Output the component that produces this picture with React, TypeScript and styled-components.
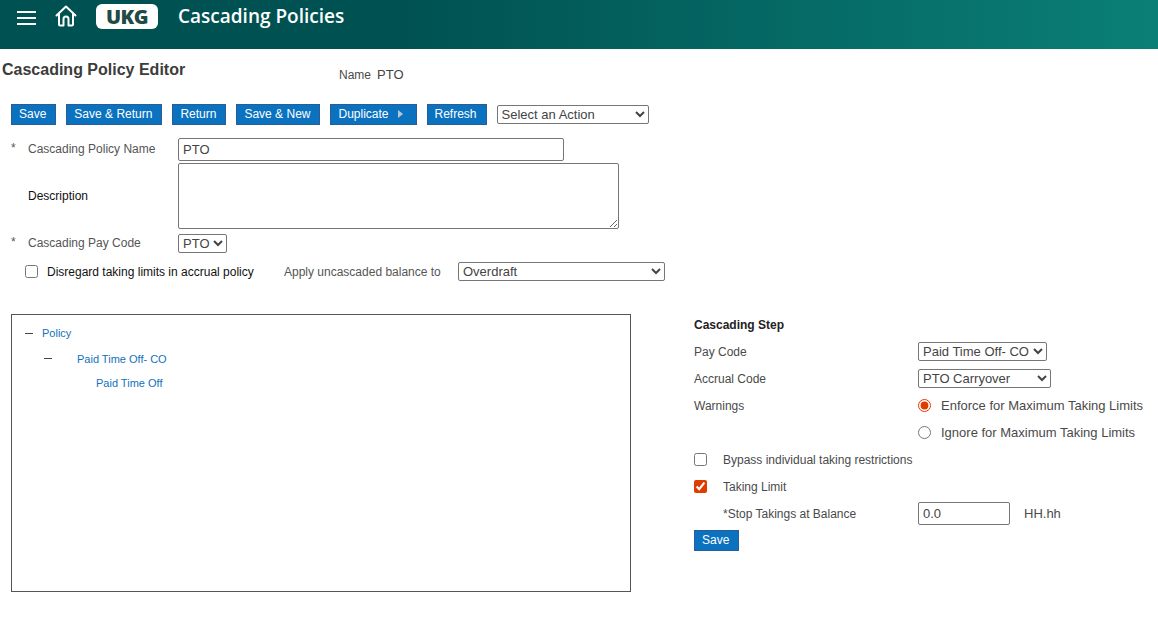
import styled, { createGlobalStyle } from 'styled-components'

const GlobalStyle = createGlobalStyle`
  html, body {
    margin: 0;
    padding: 0;
    background: #fff;
    font-family: "Liberation Sans", Arial, sans-serif;
    font-size: 12px;
    color: #4a4a4a;
  }
`

const Page = styled.div`
  width: 1158px;
  height: 637px;
  overflow: hidden;
`

const TopBar = styled.header`
  height: 49px;
  display: flex;
  align-items: flex-start;
  background: linear-gradient(90deg, #005151 0%, #005252 35%, #0a7f76 100%);
  color: #fff;
`

const MenuButton = styled.div`
  width: 19px;
  margin: 11px 0 0 17px;
  display: flex;
  flex-direction: column;
  gap: 4px;
  span {
    height: 2px;
    background: #fff;
  }
`

const HomeIcon = styled.svg`
  width: 24px;
  height: 24px;
  margin: 4px 0 0 18px;
`

const Logo = styled.div`
  width: 62px;
  height: 25px;
  margin: 4px 0 0 18px;
  background: #fff;
  border-radius: 6px;
  display: flex;
  align-items: center;
  justify-content: center;
  color: #1f4a45;
  font-family: "Open Sans", sans-serif;
  font-weight: 800;
  font-size: 20px;
  letter-spacing: -0.6px;
`

const AppTitle = styled.div`
  margin: 3px 0 0 20px;
  font-family: "Open Sans", sans-serif;
  font-size: 19px;
  font-weight: 600;
  line-height: 27px;
`

const TitleRow = styled.div`
  height: 55px;
  display: flex;
  align-items: flex-start;
`

const EditorTitle = styled.h1`
  width: 337px;
  margin: 12px 0 0 2px;
  font-size: 16px;
  line-height: 18px;
  font-weight: 700;
  color: #3c3c3c;
`

const NameInfo = styled.div`
  margin-top: 19px;
  display: flex;
  gap: 6px;
  line-height: 15px;
  span:last-child {
    margin-top: -1px;
    color: #444;
    font-size: 13px;
  }
`

const Toolbar = styled.div`
  height: 21px;
  padding-left: 11px;
  display: flex;
  align-items: center;
  gap: 10px;
`

const Button = styled.button`
  height: 21px;
  padding: 0 9px 2px 7px;
  margin: 0;
  border: 1px solid #2a5d95;
  border-radius: 0;
  background: #0b72c0;
  color: #fff;
  font: 12px "Liberation Sans", Arial, sans-serif;
  display: flex;
  align-items: center;
  gap: 9px;
`

const Caret = styled.i`
  width: 0;
  height: 0;
  margin-right: 4px;
  border-left: 5px solid #b9c6d2;
  border-top: 4px solid transparent;
  border-bottom: 4px solid transparent;
`

const Select = styled.select<{ $width: number }>`
  width: ${props => props.$width}px;
  height: 19px;
  padding: 0;
  border: 1px solid #767676;
  border-radius: 2px;
  background: #fff;
  color: #444;
  font: 13px "Liberation Sans", Arial, sans-serif;
`

const FormRow = styled.div<{ $height: number; $top: number }>`
  height: ${props => props.$height}px;
  margin-top: ${props => props.$top}px;
  display: flex;
  align-items: center;
`

const Required = styled.span`
  width: 28px;
  padding-left: 11px;
  box-sizing: border-box;
  color: #555;
  position: relative;
  top: -1px;
`

const FieldLabel = styled.label<{ $dark?: boolean }>`
  width: 150px;
  color: ${props => (props.$dark ? '#111' : '#555')};
`

const TextInput = styled.input<{ $width: number }>`
  width: ${props => props.$width}px;
  height: 23px;
  box-sizing: border-box;
  padding: 0 4px;
  margin: 0;
  border: 1px solid #767676;
  border-radius: 2px;
  color: #444;
  font: 13px "Liberation Sans", Arial, sans-serif;
`

const TextArea = styled.textarea`
  width: 441px;
  height: 66px;
  box-sizing: border-box;
  margin: 0;
  border: 1px solid #767676;
  border-radius: 2px;
`

const Check = styled.input`
  width: 13px;
  height: 13px;
  margin: 0;
  accent-color: #e03c00;
  flex: none;
`

const OptionsRow = styled.div`
  height: 29px;
  margin-top: 1px;
  padding-left: 25px;
  display: flex;
  align-items: center;
`

const OptionLabel = styled.span`
  width: 237px;
  margin-left: 9px;
  color: #111;
`

const PlainLabel = styled.span`
  width: 174px;
  color: #555;
`

const Columns = styled.div`
  margin-top: 28px;
  display: flex;
  align-items: flex-start;
`

const TreePanel = styled.div`
  width: 620px;
  height: 278px;
  margin-left: 11px;
  box-sizing: border-box;
  border: 1px solid #555;
  padding-top: 6px;
  font-size: 11px;
`

const TreeRow = styled.div<{ $indent: number; $gap: number; $top: number }>`
  height: 24.5px;
  margin-top: ${props => props.$top}px;
  padding-left: ${props => props.$indent}px;
  display: flex;
  align-items: center;
  gap: ${props => props.$gap}px;
  color: #1272bd;
`

const Dash = styled.i`
  width: 8px;
  height: 1px;
  background: #444;
`

const StepPanel = styled.div`
  margin-left: 63px;
  padding-top: 1px;
  width: 464px;
`

const StepTitle = styled.div`
  height: 23px;
  line-height: 20px;
  font-weight: 700;
  color: #222;
`

const StepRow = styled.div`
  height: 27px;
  display: grid;
  grid-template-columns: 224px 1fr;
  align-items: center;
`

const BalanceRow = styled(StepRow)`
  margin-bottom: 3px;
`

const RadioOption = styled.div`
  display: flex;
  align-items: center;
  gap: 10px;
  font-size: 13px;
`

const RadioInput = styled.input`
  width: 13px;
  height: 13px;
  margin: 0;
  accent-color: #e03c00;
`

const CheckRow = styled.div`
  height: 27px;
  display: flex;
  align-items: center;
  gap: 16px;
`

const BalanceCell = styled.div`
  display: flex;
  align-items: center;
  gap: 14px;
  font-size: 13px;
`

const BalanceLabel = styled.span`
  padding-left: 29px;
`

function HomeGlyph() {
  return (
    <HomeIcon viewBox="0 0 24 24" fill="none" stroke="#fff" strokeWidth="2" strokeLinejoin="round" strokeLinecap="round">
      <path d="M2.5 11.5 12 2.500l9.500 9" />
      <path d="M5 9.500V20.500a1 1 0 0 0 1 1h3.500V15a2.500 2.500 0 0 1 5 0v6.500h3.500a1 1 0 0 0 1-1V9.500" />
    </HomeIcon>
  )
}

export default function App() {
  return (
    <Page>
      <GlobalStyle />
      <TopBar>
        <MenuButton>
          <span />
          <span />
          <span />
        </MenuButton>
        <HomeGlyph />
        <Logo>UKG</Logo>
        <AppTitle>Cascading Policies</AppTitle>
      </TopBar>

      <TitleRow>
        <EditorTitle>Cascading Policy Editor</EditorTitle>
        <NameInfo>
          <span>Name</span>
          <span>PTO</span>
        </NameInfo>
      </TitleRow>

      <Toolbar>
        <Button>Save</Button>
        <Button>Save &amp; Return</Button>
        <Button>Return</Button>
        <Button>Save &amp; New</Button>
        <Button>
          Duplicate
          <Caret />
        </Button>
        <Button>Refresh</Button>
        <Select $width={152} defaultValue="action">
          <option value="action">Select an Action</option>
        </Select>
      </Toolbar>

      <FormRow $height={24} $top={12}>
        <Required>*</Required>
        <FieldLabel>Cascading Policy Name</FieldLabel>
        <TextInput $width={386} defaultValue="PTO" />
      </FormRow>
      <FormRow $height={68} $top={1}>
        <Required />
        <FieldLabel $dark>Description</FieldLabel>
        <TextArea />
      </FormRow>
      <FormRow $height={26} $top={0}>
        <Required>*</Required>
        <FieldLabel>Cascading Pay Code</FieldLabel>
        <Select $width={49} defaultValue="pto">
          <option value="pto">PTO</option>
        </Select>
      </FormRow>

      <OptionsRow>
        <Check type="checkbox" />
        <OptionLabel>Disregard taking limits in accrual policy</OptionLabel>
        <PlainLabel>Apply uncascaded balance to</PlainLabel>
        <Select $width={207} defaultValue="overdraft">
          <option value="overdraft">Overdraft</option>
        </Select>
      </OptionsRow>

      <Columns>
        <TreePanel>
          <TreeRow $indent={13} $gap={9} $top={0}>
            <Dash />
            Policy
          </TreeRow>
          <TreeRow $indent={32} $gap={25} $top={1}>
            <Dash />
            Paid Time Off- CO
          </TreeRow>
          <TreeRow $indent={84} $gap={0} $top={0}>
            Paid Time Off
          </TreeRow>
        </TreePanel>

        <StepPanel>
          <StepTitle>Cascading Step</StepTitle>
          <StepRow>
            <span>Pay Code</span>
            <Select $width={129} defaultValue="co">
              <option value="co">Paid Time Off- CO</option>
            </Select>
          </StepRow>
          <StepRow>
            <span>Accrual Code</span>
            <Select $width={133} defaultValue="carry">
              <option value="carry">PTO Carryover</option>
            </Select>
          </StepRow>
          <StepRow>
            <span>Warnings</span>
            <RadioOption>
              <RadioInput type="radio" name="warn" defaultChecked />
              Enforce for Maximum Taking Limits
            </RadioOption>
          </StepRow>
          <StepRow>
            <span />
            <RadioOption>
              <RadioInput type="radio" name="warn" />
              Ignore for Maximum Taking Limits
            </RadioOption>
          </StepRow>
          <CheckRow>
            <Check type="checkbox" />
            Bypass individual taking restrictions
          </CheckRow>
          <CheckRow>
            <Check type="checkbox" defaultChecked />
            Taking Limit
          </CheckRow>
          <BalanceRow>
            <BalanceLabel>*Stop Takings at Balance</BalanceLabel>
            <BalanceCell>
              <TextInput $width={92} defaultValue="0.0" />
              HH.hh
            </BalanceCell>
          </BalanceRow>
          <Button>Save</Button>
        </StepPanel>
      </Columns>
    </Page>
  )
}
